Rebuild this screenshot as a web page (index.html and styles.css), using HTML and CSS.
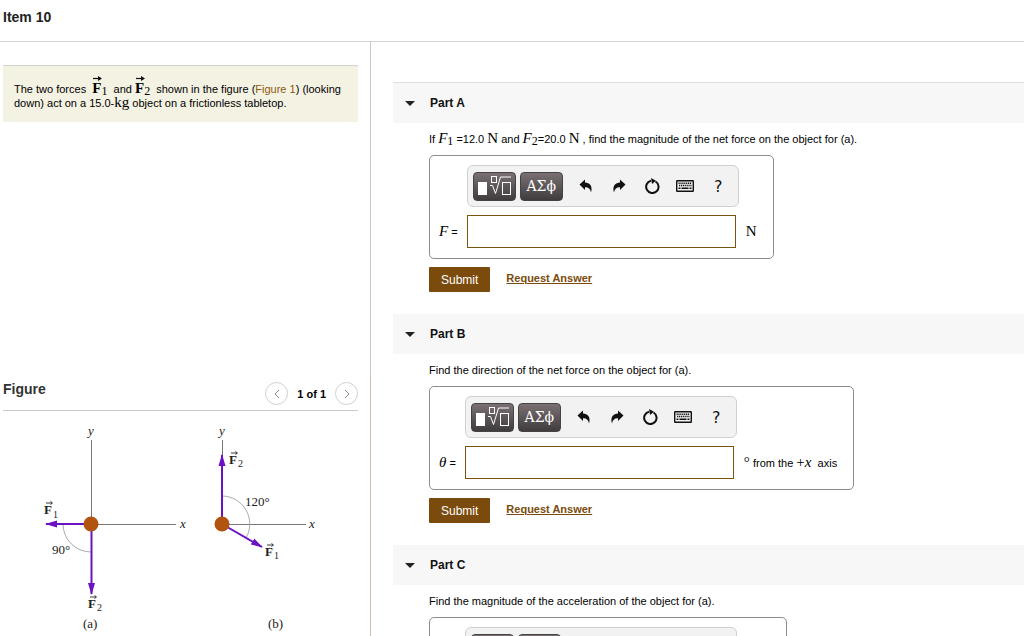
FILE: index.html
```html
<!DOCTYPE html>
<html lang="en">
<head>
  <meta charset="UTF-8" />
  <meta name="viewport" content="width=device-width, initial-scale=1.0"/>
  <title>Item 10</title>
  <link rel="stylesheet" href="styles.css">
</head>
<body>

  <!-- Shared icons -->
  <svg class="sprite" aria-hidden="true">
    <symbol id="icon-template" viewBox="0 0 33 20">
      <rect x="0" y="6" width="9" height="13" fill="#fff"/>
      <g fill="none" stroke="#fff">
        <rect x="13.500" y="0.500" width="5" height="6"/>
        <path d="M12 9.500h2.500l3 8 5-16.500h10.500"/>
        <rect x="24.500" y="6.500" width="8" height="12"/>
      </g>
    </symbol>
    <symbol id="icon-undo" viewBox="0 0 14 14">
      <path d="M0.500 5.500L6 0.500V3.500C10.500 3.500 14 7 12 13.500C11.500 10 9.500 8 6 8.200V11Z" fill="#111"/>
    </symbol>
    <symbol id="icon-redo" viewBox="0 0 14 14">
      <path d="M13.500 5.500L8 0.500V3.500C3.500 3.500 0 7 2 13.500C2.500 10 4.500 8 8 8.200V11Z" fill="#111"/>
    </symbol>
    <symbol id="icon-reset" viewBox="0 0 16 16">
      <path d="M11.500 3.500A6.200 6.200 0 1 1 7 2.800" fill="none" stroke="#111" stroke-width="2"/>
      <path d="M7 0L12 2.800L8 6Z" fill="#111"/>
    </symbol>
    <symbol id="icon-keyboard" viewBox="0 0 18 12">
      <rect x="0.700" y="0.700" width="16.600" height="10.600" rx="0.500" fill="#f2f2f2" stroke="#111" stroke-width="1.400"/>
      <path d="M2.500 3.200h13M3 5.500h12.500" stroke="#111" stroke-width="1.400" stroke-dasharray="1.200 0.700"/>
      <path d="M2.500 8.200h2M5.500 8.200h7M13.500 8.200h2" stroke="#111" stroke-width="1.600"/>
    </symbol>
    <symbol id="icon-vec" viewBox="0 0 9 5">
      <path d="M0 2.500h7" stroke="#111" stroke-width="1.200"/>
      <path d="M5 0l4 2.500L5 5Z" fill="#111"/>
    </symbol>
  </svg>

  <header class="top">
    <h1>Item 10</h1>
  </header>

  <div class="layout">
    <aside class="side">
      <div class="intro">
        <p class="problem">The two forces &nbsp;<span class="math vec"><svg width="9" height="5"><use href="#icon-vec"/></svg><b>F</b><sub>1</sub></span>&nbsp; and <span class="math vec"><svg width="9" height="5"><use href="#icon-vec"/></svg><b>F</b><sub>2</sub></span>&nbsp; shown in the figure (<a href="#figure">Figure 1</a>) (looking down) act on a 15.0-<span class="math">kg</span> object on a frictionless tabletop.</p>
      </div>

      <section class="figure" id="figure">
        <div class="figure-head">
          <h2>Figure</h2>
          <div class="pager">
            <button type="button" class="page-btn" aria-label="Previous figure">
              <svg width="6" height="10" viewBox="0 0 6 10"><path d="M5 1L1 5l4 4"/></svg>
            </button>
            <span>1 of 1</span>
            <button type="button" class="page-btn" aria-label="Next figure">
              <svg width="6" height="10" viewBox="0 0 6 10"><path d="M1 1l4 4-4 4"/></svg>
            </button>
          </div>
        </div>
        <svg class="diagram" width="354" height="225" viewBox="0 0 354 225">
          <defs>
            <marker id="head" markerUnits="userSpaceOnUse" markerWidth="12" markerHeight="8" refX="11" refY="4" orient="auto">
              <path d="M0 0.500L12 4L0 7.500Z" fill="#6a12c4"/>
            </marker>
            <path id="bar" d="M0 2h6M4.500 0.500l2 1.500L4.500 3.500" fill="none" stroke="#222" stroke-width="0.900"/>
          </defs>

          <!-- (a) -->
          <path class="axis" d="M88.500 29v84M88 113.500h85"/>
          <path class="arc" d="M60 113a28 28 0 0 0 28 28"/>
          <path class="force" d="M88 113H43"/>
          <path class="force" d="M88.500 113V183"/>
          <circle cx="88" cy="113" r="7.500"/>
          <text class="it" x="85" y="24">y</text>
          <text class="it" x="177" y="117">x</text>
          <text x="49" y="143">90°</text>
          <text class="bold" x="41" y="103">F</text><text class="sub" x="50" y="107">1</text>
          <use href="#bar" x="43" y="90"/>
          <text class="bold" x="85" y="197">F</text><text class="sub" x="94" y="200">2</text>
          <use href="#bar" x="87" y="184"/>
          <text x="80" y="217">(a)</text>

          <!-- (b) -->
          <path class="axis" d="M219.500 29v84M219 113.500h84"/>
          <path class="arc" d="M219 85a28 28 0 0 1 24 42"/>
          <path class="force" d="M219 113V44"/>
          <path class="force" d="M219 113L259 136"/>
          <circle cx="219" cy="113" r="7.500"/>
          <text class="it" x="216" y="24">y</text>
          <text class="it" x="306" y="117">x</text>
          <text x="242" y="95">120°</text>
          <text class="bold" x="226" y="53">F</text><text class="sub" x="235" y="56">2</text>
          <use href="#bar" x="228" y="40"/>
          <text class="bold" x="262" y="145">F</text><text class="sub" x="271" y="148">1</text>
          <use href="#bar" x="264" y="132"/>
          <text x="265" y="217">(b)</text>
        </svg>
      </section>
    </aside>

    <main class="parts">
      <section class="part">
        <h2 class="part-head"><span class="caret"></span>Part A</h2>
        <div class="part-body">
          <p class="prompt">If <span class="math"><i>F</i><sub>1</sub></span> =12.0 <span class="math">N</span> and <span class="math"><i>F</i><sub>2</sub></span>=20.0 <span class="math">N</span> , find the magnitude of the net force on the object for (a).</p>
          <div class="answer">
            <div class="toolbar">
              <button type="button" class="dark" aria-label="Templates"><svg width="33" height="20"><use href="#icon-template"/></svg></button>
              <button type="button" class="dark">ΑΣϕ</button>
              <div class="tools">
                <button type="button" aria-label="Undo"><svg width="14" height="14"><use href="#icon-undo"/></svg></button>
                <button type="button" aria-label="Redo"><svg width="14" height="14"><use href="#icon-redo"/></svg></button>
                <button type="button" aria-label="Reset"><svg width="16" height="16"><use href="#icon-reset"/></svg></button>
                <button type="button" aria-label="Keyboard"><svg width="18" height="12"><use href="#icon-keyboard"/></svg></button>
                <button type="button" class="help">?</button>
              </div>
            </div>
            <label for="ansA"><i class="math">F</i> =</label>
            <input type="text" id="ansA">
            <span class="unit"><span class="math">N</span></span>
          </div>
          <div class="actions">
            <button type="button" class="submit">Submit</button>
            <a href="#">Request Answer</a>
          </div>
        </div>
      </section>

      <section class="part">
        <h2 class="part-head"><span class="caret"></span>Part B</h2>
        <div class="part-body">
          <p class="prompt">Find the direction of the net force on the object for (a).</p>
          <div class="answer">
            <div class="toolbar">
              <button type="button" class="dark" aria-label="Templates"><svg width="33" height="20"><use href="#icon-template"/></svg></button>
              <button type="button" class="dark">ΑΣϕ</button>
              <div class="tools">
                <button type="button" aria-label="Undo"><svg width="14" height="14"><use href="#icon-undo"/></svg></button>
                <button type="button" aria-label="Redo"><svg width="14" height="14"><use href="#icon-redo"/></svg></button>
                <button type="button" aria-label="Reset"><svg width="16" height="16"><use href="#icon-reset"/></svg></button>
                <button type="button" aria-label="Keyboard"><svg width="18" height="12"><use href="#icon-keyboard"/></svg></button>
                <button type="button" class="help">?</button>
              </div>
            </div>
            <label for="ansB"><i class="math">θ</i> =</label>
            <input type="text" id="ansB">
            <span class="unit"><span class="math">°</span> from the <span class="math">+<i>x</i></span>&nbsp; axis</span>
          </div>
          <div class="actions">
            <button type="button" class="submit">Submit</button>
            <a href="#">Request Answer</a>
          </div>
        </div>
      </section>

      <section class="part">
        <h2 class="part-head"><span class="caret"></span>Part C</h2>
        <div class="part-body">
          <p class="prompt">Find the magnitude of the acceleration of the object for (a).</p>
          <div class="answer">
            <div class="toolbar">
              <button type="button" class="dark" aria-label="Templates"><svg width="33" height="20"><use href="#icon-template"/></svg></button>
              <button type="button" class="dark">ΑΣϕ</button>
              <div class="tools">
                <button type="button" aria-label="Undo"><svg width="14" height="14"><use href="#icon-undo"/></svg></button>
                <button type="button" aria-label="Redo"><svg width="14" height="14"><use href="#icon-redo"/></svg></button>
                <button type="button" aria-label="Reset"><svg width="16" height="16"><use href="#icon-reset"/></svg></button>
                <button type="button" aria-label="Keyboard"><svg width="18" height="12"><use href="#icon-keyboard"/></svg></button>
                <button type="button" class="help">?</button>
              </div>
            </div>
            <label for="ansC"><i class="math">a</i> =</label>
            <input type="text" id="ansC">
            <span class="unit"><span class="math">m/s²</span></span>
          </div>
        </div>
      </section>
    </main>
  </div>

</body>
</html>
```
FILE: styles.css
```css
* {
  box-sizing: border-box;
}

body {
  margin: 0;
  height: 100vh;
  overflow: hidden;
  display: flex;
  flex-direction: column;
  font-family: "Liberation Sans", Arial, sans-serif;
  font-size: 11px;
  line-height: 14px;
  color: #000;
  background: #fff;
}

h1, h2, p {
  margin: 0;
}

button {
  font-family: inherit;
  padding: 0;
  border: none;
  background: none;
  cursor: pointer;
}

.sprite {
  display: none;
}

.math {
  font-family: "Liberation Serif", "Times New Roman", serif;
  font-size: 15px;
  line-height: 1px;
}

.math sub {
  font-size: 12px;
  line-height: 1px;
  vertical-align: -2px;
}

.vec {
  position: relative;
}

/* arrow over the vector letter */
.vec svg {
  position: absolute;
  left: 1px;
  top: -4px;
}

.top {
  flex: none;
  height: 42px;
  padding: 9px 3px;
  border-bottom: 1px solid #d4d4d4;
}

.top h1 {
  font-size: 14px;
  line-height: 16px;
  color: #222;
}

.layout {
  flex: 1;
  min-height: 0;
  display: flex;
}

/* Left column */
.side {
  flex: none;
  width: 371px;
  display: flex;
  flex-direction: column;
}

.intro {
  flex: 1;
  padding: 23px 12px 0 3px;
  border-right: 1px solid #ccc8c8;
}

.problem {
  padding: 16px 10px 12px 11px;
  border-top: 1px solid #d2d2cc;
  background: #f4f2e3;
}

.problem a {
  color: #8a5a0c;
  text-decoration: none;
}

.figure {
  padding: 6px 12px 0 3px;
  border-right: 1px solid #c9bcb0;
}

.figure-head {
  display: flex;
  justify-content: space-between;
  height: 29px;
  border-bottom: 1px solid #ccc;
}

.figure-head h2 {
  font-size: 14px;
  line-height: 14px;
  color: #333;
}

.pager {
  display: flex;
  align-items: center;
  gap: 9px;
  height: 23px;
  font-weight: bold;
}

.page-btn {
  display: flex;
  align-items: center;
  justify-content: center;
  width: 23px;
  height: 23px;
  border: 1px solid #d0d0d0;
  border-radius: 50%;
}

.page-btn path {
  fill: none;
  stroke: #888;
}

.diagram {
  display: block;
  font-family: "Liberation Serif", "Times New Roman", serif;
  font-size: 13px;
  fill: #222;
}

.axis {
  stroke: #777;
}

.arc {
  fill: none;
  stroke: #aaa;
}

.force {
  stroke: #6a12c4;
  stroke-width: 2;
  marker-end: url(#head);
}

.diagram circle {
  fill: #b0540f;
}

.it {
  font-style: italic;
}

.bold {
  font-weight: bold;
}

.sub {
  font-size: 10px;
}

/* Right column */
.parts {
  flex: 1;
  min-width: 0;
  padding: 40px 0 0 22px;
}

.part-head {
  display: flex;
  align-items: center;
  gap: 15px;
  height: 40px;
  padding-left: 12px;
  background: #f7f7f7;
  font-size: 12px;
  color: #111;
}

.part:first-child .part-head {
  height: 41px;
  border-top: 1px solid #e0e0e0;
}

.caret {
  border: 5px solid transparent;
  border-top-color: #222;
  border-bottom: none;
}

.part-body {
  padding: 0 0 22px 36px;
}

.prompt {
  height: 32px;
  line-height: 32px;
}

.answer {
  display: grid;
  grid-template-columns: auto 272px auto;
  column-gap: 7px;
  row-gap: 8px;
  align-items: center;
  width: fit-content;
  padding: 9px 16px 10px 9px;
  border: 1px solid #8c8c8c;
  border-radius: 5px;
}

.toolbar {
  grid-column: 2;
  display: flex;
  align-items: center;
  gap: 4px;
  height: 42px;
  padding: 0 5px;
  border: 1px solid #d0d0d0;
  border-radius: 6px;
  background: #f2f2f2;
}

.dark {
  display: flex;
  align-items: center;
  justify-content: center;
  flex: none;
  width: 43px;
  height: 29px;
  border: 1px solid #444;
  border-radius: 4px;
  background: linear-gradient(#7a7072, #403c3e);
  color: #fff;
  font-family: "DejaVu Serif", serif;
  font-size: 14px;
}

.tools {
  display: flex;
  padding-left: 3px;
}

.tools button {
  display: flex;
  align-items: center;
  justify-content: center;
  flex: none;
  width: 33px;
  height: 29px;
}

.tools .help {
  font-family: "DejaVu Sans", sans-serif;
  font-size: 16px;
  color: #111;
}

.answer label {
  grid-column: 1;
  padding-right: 2px;
  white-space: nowrap;
}

.answer input {
  width: 269px;
  height: 33px;
  padding: 0 6px;
  border: 1px solid #7a5510;
  border-radius: 0;
  background: #fff;
  font: inherit;
}

.unit {
  white-space: nowrap;
}

.actions {
  display: flex;
  gap: 16px;
  margin-top: 8px;
}

.submit {
  height: 25px;
  padding: 0 12px;
  border-radius: 1px;
  background: #7a4b0c;
  color: #fff;
  font-size: 12px;
}

.actions a {
  line-height: 22px;
  color: #7a4b0c;
  font-weight: bold;
}
```
